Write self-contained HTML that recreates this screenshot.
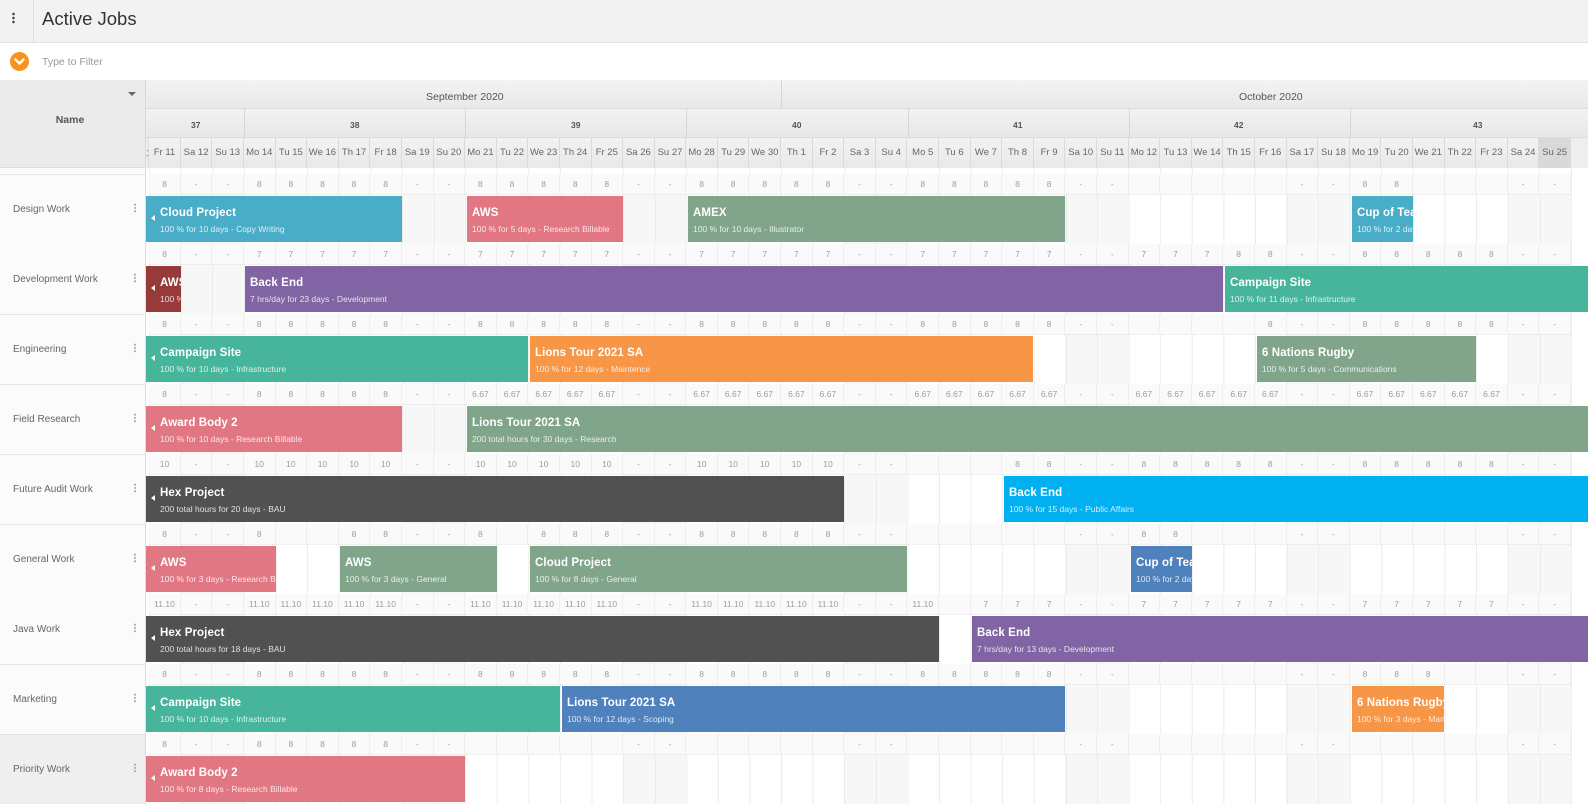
<!DOCTYPE html>
<html><head><meta charset="utf-8"><style>
*{box-sizing:border-box;margin:0;padding:0}
body{width:1588px;height:804px;overflow:hidden;background:#fff;font-family:"Liberation Sans",Arial,sans-serif;position:relative}
.abs{position:absolute}
#top{left:0;top:0;width:1588px;height:43px;background:#f2f2f2;border-bottom:1px solid #e2e2e2}
#filter{left:0;top:43px;width:1588px;height:37px;background:#fff}
#lh{left:0;top:80px;width:146px;height:88px;background:#ebebeb;border-right:1px solid #d8d8d8;border-bottom:1px solid #ddd}
#lp{left:0;top:168px;width:146px;height:636px;background:#fbfbfb;border-right:1px solid #ddd}
.lr{position:absolute;left:0;width:145px;height:70px;border-top:1px solid #e4e4e4;font-size:10px;color:#666}
.lr span{position:absolute;left:13px;top:29px}
.lr b{position:absolute;left:134px;top:28px;width:2px;height:10px;background:radial-gradient(circle,#aaa 0.9px,transparent 1.1px) 0 0/2px 3.3px repeat-y}
#th{left:146px;top:80px;width:1442px;height:88px;overflow:hidden;background:#eee}
.mrow{position:absolute;left:0;top:0;width:1442px;height:29px;background:linear-gradient(#f3f3f3,#e9e9e9);border-bottom:1px solid #dcdcdc;font-size:10.5px;color:#555}
.wrow{position:absolute;left:0;top:29px;width:1442px;height:29px;background:linear-gradient(#f2f2f2,#e8e8e8);border-bottom:1px solid #dcdcdc;font-size:8.5px;font-weight:bold;color:#555}
.drow{position:absolute;left:3.2px;top:58px;height:30px;display:flex}
.drow i{font-style:normal;flex:none;width:31.6px;height:30px;line-height:30px;text-align:center;font-size:9.5px;color:#666;border-right:1px solid #dadada;background:linear-gradient(#f2f2f2,#e9e9e9)}
.vsep{position:absolute;top:0;width:1px;background:#d6d6d6}
#g{left:146px;top:168px;width:1442px;height:636px;overflow:hidden;background-color:#fff;background-image:linear-gradient(to right,#ececec 1px,transparent 1px);background-size:31.6px 100%;background-position:3.2px 0}
.we{position:absolute;top:6px;height:640px;width:31.6px;background:#f7f7f7;border-left:1px solid #ececec}
.s{position:absolute;left:3.2px;height:21px;display:flex;border-bottom:1px dotted #e2e2e2}
.s i{font-style:normal;flex:none;width:31.6px;height:20px;line-height:20px;text-align:center;font-size:8.5px;color:#9d9d9d;border-right:1px solid #efefef;background:#fafafa}
.bar{position:absolute;height:46px;overflow:hidden;white-space:nowrap;color:#fff}
.bar b{position:absolute;top:11px;font-size:11.5px;font-weight:bold;letter-spacing:0.1px}
.bar em{position:absolute;top:28px;font-style:normal;font-size:8.5px;opacity:.82}
.bar u{position:absolute;left:5px;top:19px;width:0;height:0;border-top:3.5px solid transparent;border-bottom:3.5px solid transparent;border-right:4px solid #fff}
.cl b,.cl em{left:14px}
.op b,.op em{left:5px}
</style></head><body>

<div id="top" class="abs">
  <div class="abs" style="left:12px;top:12px;width:3px;height:12px;background:radial-gradient(circle,#444 1.2px,transparent 1.4px) 0 0/3px 4px repeat-y"></div>
  <div class="abs" style="left:33px;top:0;width:1px;height:43px;background:#e0e0e0"></div>
  <div class="abs" style="left:42px;top:8px;font-size:18.5px;color:#333">Active Jobs</div>
</div>
<div id="filter" class="abs">
  <div class="abs" style="left:10px;top:9px;width:19px;height:19px;border-radius:50%;background:#f7931e"></div>
  <svg class="abs" style="left:10px;top:9px" width="19" height="19" viewBox="0 0 19 19"><path d="M5.5 7.5 L9.5 11.5 L13.5 7.5" fill="none" stroke="#fff" stroke-width="2.4" stroke-linecap="round" stroke-linejoin="round"/></svg>
  <div class="abs" style="left:42px;top:13px;font-size:10.5px;color:#9a9a9a">Type to Filter</div>
</div>

<div id="lh" class="abs">
  <div class="abs" style="left:128px;top:12px;width:0;height:0;border-left:4px solid transparent;border-right:4px solid transparent;border-top:4px solid #666"></div>
  <div class="abs" style="left:0;width:140px;top:34px;text-align:center;font-size:10.5px;font-weight:bold;color:#555">Name</div>
</div>

<div id="lp" class="abs">
  <div class="lr" style="top:6px"><span>Design Work</span><b></b></div>
  <div class="lr" style="top:76px;border-top-color:transparent"><span>Development Work</span><b></b></div>
  <div class="lr" style="top:146px"><span>Engineering</span><b></b></div>
  <div class="lr" style="top:216px"><span>Field Research</span><b></b></div>
  <div class="lr" style="top:286px"><span>Future Audit Work</span><b></b></div>
  <div class="lr" style="top:356px"><span>General Work</span><b></b></div>
  <div class="lr" style="top:426px;border-top-color:transparent"><span>Java Work</span><b></b></div>
  <div class="lr" style="top:496px"><span>Marketing</span><b></b></div>
  <div class="lr" style="top:566px;background:#efefef"><span>Priority Work</span><b></b></div>
</div>

<div id="th" class="abs">
  <div class="mrow">
    <div class="vsep" style="left:635px;height:29px"></div>
    <span class="abs" style="left:280px;top:11px">September 2020</span>
    <span class="abs" style="left:1093px;top:11px">October 2020</span>
  </div>
  <div class="wrow">
    <div class="vsep" style="left:98px;height:29px"></div>
    <div class="vsep" style="left:319px;height:29px"></div>
    <div class="vsep" style="left:540px;height:29px"></div>
    <div class="vsep" style="left:762px;height:29px"></div>
    <div class="vsep" style="left:983px;height:29px"></div>
    <div class="vsep" style="left:1204px;height:29px"></div>
    <span class="abs" style="left:45px;top:11px">37</span>
    <span class="abs" style="left:204px;top:11px">38</span>
    <span class="abs" style="left:425px;top:11px">39</span>
    <span class="abs" style="left:646px;top:11px">40</span>
    <span class="abs" style="left:867px;top:11px">41</span>
    <span class="abs" style="left:1088px;top:11px">42</span>
    <span class="abs" style="left:1327px;top:11px">43</span>
  </div>
  <div class="abs" style="left:0;top:58px;width:3.2px;height:30px;background:#eee;border-right:1px solid #dadada;font-size:9px;color:#666;line-height:30px;overflow:hidden">1</div>
  <div class="drow">
<i>Fr 11</i><i>Sa 12</i><i>Su 13</i><i>Mo 14</i><i>Tu 15</i><i>We 16</i><i>Th 17</i><i>Fr 18</i><i>Sa 19</i><i>Su 20</i><i>Mo 21</i><i>Tu 22</i><i>We 23</i><i>Th 24</i><i>Fr 25</i><i>Sa 26</i><i>Su 27</i><i>Mo 28</i><i>Tu 29</i><i>We 30</i><i>Th 1</i><i>Fr 2</i><i>Sa 3</i><i>Su 4</i><i>Mo 5</i><i>Tu 6</i><i>We 7</i><i>Th 8</i><i>Fr 9</i><i>Sa 10</i><i>Su 11</i><i>Mo 12</i><i>Tu 13</i><i>We 14</i><i>Th 15</i><i>Fr 16</i><i>Sa 17</i><i>Su 18</i><i>Mo 19</i><i>Tu 20</i><i>We 21</i><i>Th 22</i><i>Fr 23</i><i>Sa 24</i><i style="background:#d9d9d9">Su 25</i>
  </div>
</div>

<div id="g" class="abs">
<div class="we" style="left:34.8px"></div><div class="we" style="left:66.4px"></div>
<div class="we" style="left:256px"></div><div class="we" style="left:287.6px"></div>
<div class="we" style="left:477.2px"></div><div class="we" style="left:508.8px"></div>
<div class="we" style="left:698.4px"></div><div class="we" style="left:730px"></div>
<div class="we" style="left:919.6px"></div><div class="we" style="left:951.2px"></div>
<div class="we" style="left:1140.8px"></div><div class="we" style="left:1172.4px"></div>
<div class="we" style="left:1362px"></div><div class="we" style="left:1393.6px"></div>

<div class="s" style="top:6px"><i>8</i><i>-</i><i>-</i><i>8</i><i>8</i><i>8</i><i>8</i><i>8</i><i>-</i><i>-</i><i>8</i><i>8</i><i>8</i><i>8</i><i>8</i><i>-</i><i>-</i><i>8</i><i>8</i><i>8</i><i>8</i><i>8</i><i>-</i><i>-</i><i>8</i><i>8</i><i>8</i><i>8</i><i>8</i><i>-</i><i>-</i><i></i><i></i><i></i><i></i><i></i><i>-</i><i>-</i><i>8</i><i>8</i><i></i><i></i><i></i><i>-</i><i>-</i></div>
<div class="s" style="top:76px"><i>8</i><i>-</i><i>-</i><i>7</i><i>7</i><i>7</i><i>7</i><i>7</i><i>-</i><i>-</i><i>7</i><i>7</i><i>7</i><i>7</i><i>7</i><i>-</i><i>-</i><i>7</i><i>7</i><i>7</i><i>7</i><i>7</i><i>-</i><i>-</i><i>7</i><i>7</i><i>7</i><i>7</i><i>7</i><i>-</i><i>-</i><i>7</i><i>7</i><i>7</i><i>8</i><i>8</i><i>-</i><i>-</i><i>8</i><i>8</i><i>8</i><i>8</i><i>8</i><i>-</i><i>-</i></div>
<div class="s" style="top:146px"><i>8</i><i>-</i><i>-</i><i>8</i><i>8</i><i>8</i><i>8</i><i>8</i><i>-</i><i>-</i><i>8</i><i>8</i><i>8</i><i>8</i><i>8</i><i>-</i><i>-</i><i>8</i><i>8</i><i>8</i><i>8</i><i>8</i><i>-</i><i>-</i><i>8</i><i>8</i><i>8</i><i>8</i><i>8</i><i>-</i><i>-</i><i></i><i></i><i></i><i></i><i>8</i><i>-</i><i>-</i><i>8</i><i>8</i><i>8</i><i>8</i><i>8</i><i>-</i><i>-</i></div>
<div class="s" style="top:216px"><i>8</i><i>-</i><i>-</i><i>8</i><i>8</i><i>8</i><i>8</i><i>8</i><i>-</i><i>-</i><i>6.67</i><i>6.67</i><i>6.67</i><i>6.67</i><i>6.67</i><i>-</i><i>-</i><i>6.67</i><i>6.67</i><i>6.67</i><i>6.67</i><i>6.67</i><i>-</i><i>-</i><i>6.67</i><i>6.67</i><i>6.67</i><i>6.67</i><i>6.67</i><i>-</i><i>-</i><i>6.67</i><i>6.67</i><i>6.67</i><i>6.67</i><i>6.67</i><i>-</i><i>-</i><i>6.67</i><i>6.67</i><i>6.67</i><i>6.67</i><i>6.67</i><i>-</i><i>-</i></div>
<div class="s" style="top:286px"><i>10</i><i>-</i><i>-</i><i>10</i><i>10</i><i>10</i><i>10</i><i>10</i><i>-</i><i>-</i><i>10</i><i>10</i><i>10</i><i>10</i><i>10</i><i>-</i><i>-</i><i>10</i><i>10</i><i>10</i><i>10</i><i>10</i><i>-</i><i>-</i><i></i><i></i><i></i><i>8</i><i>8</i><i>-</i><i>-</i><i>8</i><i>8</i><i>8</i><i>8</i><i>8</i><i>-</i><i>-</i><i>8</i><i>8</i><i>8</i><i>8</i><i>8</i><i>-</i><i>-</i></div>
<div class="s" style="top:356px"><i>8</i><i>-</i><i>-</i><i>8</i><i></i><i></i><i>8</i><i>8</i><i>-</i><i>-</i><i>8</i><i></i><i>8</i><i>8</i><i>8</i><i>-</i><i>-</i><i>8</i><i>8</i><i>8</i><i>8</i><i>8</i><i>-</i><i>-</i><i></i><i></i><i></i><i></i><i></i><i>-</i><i>-</i><i>8</i><i>8</i><i></i><i></i><i></i><i>-</i><i>-</i><i></i><i></i><i></i><i></i><i></i><i>-</i><i>-</i></div>
<div class="s" style="top:426px"><i>11.10</i><i>-</i><i>-</i><i>11.10</i><i>11.10</i><i>11.10</i><i>11.10</i><i>11.10</i><i>-</i><i>-</i><i>11.10</i><i>11.10</i><i>11.10</i><i>11.10</i><i>11.10</i><i>-</i><i>-</i><i>11.10</i><i>11.10</i><i>11.10</i><i>11.10</i><i>11.10</i><i>-</i><i>-</i><i>11.10</i><i></i><i>7</i><i>7</i><i>7</i><i>-</i><i>-</i><i>7</i><i>7</i><i>7</i><i>7</i><i>7</i><i>-</i><i>-</i><i>7</i><i>7</i><i>7</i><i>7</i><i>7</i><i>-</i><i>-</i></div>
<div class="s" style="top:496px"><i>8</i><i>-</i><i>-</i><i>8</i><i>8</i><i>8</i><i>8</i><i>8</i><i>-</i><i>-</i><i>8</i><i>8</i><i>8</i><i>8</i><i>8</i><i>-</i><i>-</i><i>8</i><i>8</i><i>8</i><i>8</i><i>8</i><i>-</i><i>-</i><i>8</i><i>8</i><i>8</i><i>8</i><i>8</i><i>-</i><i>-</i><i></i><i></i><i></i><i></i><i></i><i>-</i><i>-</i><i>8</i><i>8</i><i>8</i><i></i><i></i><i>-</i><i>-</i></div>
<div class="s" style="top:566px"><i>8</i><i>-</i><i>-</i><i>8</i><i>8</i><i>8</i><i>8</i><i>8</i><i>-</i><i>-</i><i></i><i></i><i></i><i></i><i></i><i>-</i><i>-</i><i></i><i></i><i></i><i></i><i></i><i>-</i><i>-</i><i></i><i></i><i></i><i></i><i></i><i>-</i><i>-</i><i></i><i></i><i></i><i></i><i></i><i>-</i><i>-</i><i></i><i></i><i></i><i></i><i></i><i>-</i><i>-</i></div>

<div class="bar cl" style="top:28px;left:0;width:256px;background:#49adc7"><u></u><b>Cloud Project</b><em>100 % for 10 days - Copy Writing</em></div>
<div class="bar op" style="top:28px;left:321px;width:156px;background:#e27784"><b>AWS</b><em>100 % for 5 days - Research Billable</em></div>
<div class="bar op" style="top:28px;left:542px;width:377px;background:#81a58a"><b>AMEX</b><em>100 % for 10 days - Illustrator</em></div>
<div class="bar op" style="top:28px;left:1206px;width:61px;background:#49adc7"><b>Cup of Tea</b><em>100 % for 2 days</em></div>
<div class="bar cl" style="top:98px;left:0;width:35px;background:#963a3a"><u></u><b>AWS</b><em>100 %</em></div>
<div class="bar op" style="top:98px;left:99px;width:978px;background:#8064a3"><b>Back End</b><em>7 hrs/day for 23 days - Development</em></div>
<div class="bar op" style="top:98px;left:1079px;width:400px;background:#46b59b"><b>Campaign Site</b><em>100 % for 11 days - Infrastructure</em></div>
<div class="bar cl" style="top:168px;left:0;width:382px;background:#46b59b"><u></u><b>Campaign Site</b><em>100 % for 10 days - Infrastructure</em></div>
<div class="bar op" style="top:168px;left:384px;width:503px;background:#f79646"><b>Lions Tour 2021 SA</b><em>100 % for 12 days - Maintence</em></div>
<div class="bar op" style="top:168px;left:1111px;width:219px;background:#81a58a"><b>6 Nations Rugby</b><em>100 % for 5 days - Communications</em></div>
<div class="bar cl" style="top:238px;left:0;width:256px;background:#e27784"><u></u><b>Award Body 2</b><em>100 % for 10 days - Research Billable</em></div>
<div class="bar op" style="top:238px;left:321px;width:1200px;background:#81a58a"><b>Lions Tour 2021 SA</b><em>200 total hours for 30 days - Research</em></div>
<div class="bar cl" style="top:308px;left:0;width:698px;background:#515151"><u></u><b>Hex Project</b><em>200 total hours for 20 days - BAU</em></div>
<div class="bar op" style="top:308px;left:858px;width:700px;background:#00b0f0"><b>Back End</b><em>100 % for 15 days - Public Affairs</em></div>
<div class="bar cl" style="top:378px;left:0;width:130px;background:#e27784"><u></u><b>AWS</b><em>100 % for 3 days - Research Billable</em></div>
<div class="bar op" style="top:378px;left:194px;width:157px;background:#81a58a"><b>AWS</b><em>100 % for 3 days - General</em></div>
<div class="bar op" style="top:378px;left:384px;width:377px;background:#81a58a"><b>Cloud Project</b><em>100 % for 8 days - General</em></div>
<div class="bar op" style="top:378px;left:985px;width:61px;background:#4f81bd"><b>Cup of Tea</b><em>100 % for 2 days</em></div>
<div class="bar cl" style="top:448px;left:0;width:793px;background:#515151"><u></u><b>Hex Project</b><em>200 total hours for 18 days - BAU</em></div>
<div class="bar op" style="top:448px;left:826px;width:800px;background:#8064a3"><b>Back End</b><em>7 hrs/day for 13 days - Development</em></div>
<div class="bar cl" style="top:518px;left:0;width:414px;background:#46b59b"><u></u><b>Campaign Site</b><em>100 % for 10 days - Infrastructure</em></div>
<div class="bar op" style="top:518px;left:416px;width:503px;background:#4f81bd"><b>Lions Tour 2021 SA</b><em>100 % for 12 days - Scoping</em></div>
<div class="bar op" style="top:518px;left:1206px;width:92px;background:#f79646"><b>6 Nations Rugby</b><em>100 % for 3 days - Marketing</em></div>
<div class="bar cl" style="top:588px;left:0;width:319px;background:#e27784"><u></u><b>Award Body 2</b><em>100 % for 8 days - Research Billable</em></div>
</div>
</body></html>
